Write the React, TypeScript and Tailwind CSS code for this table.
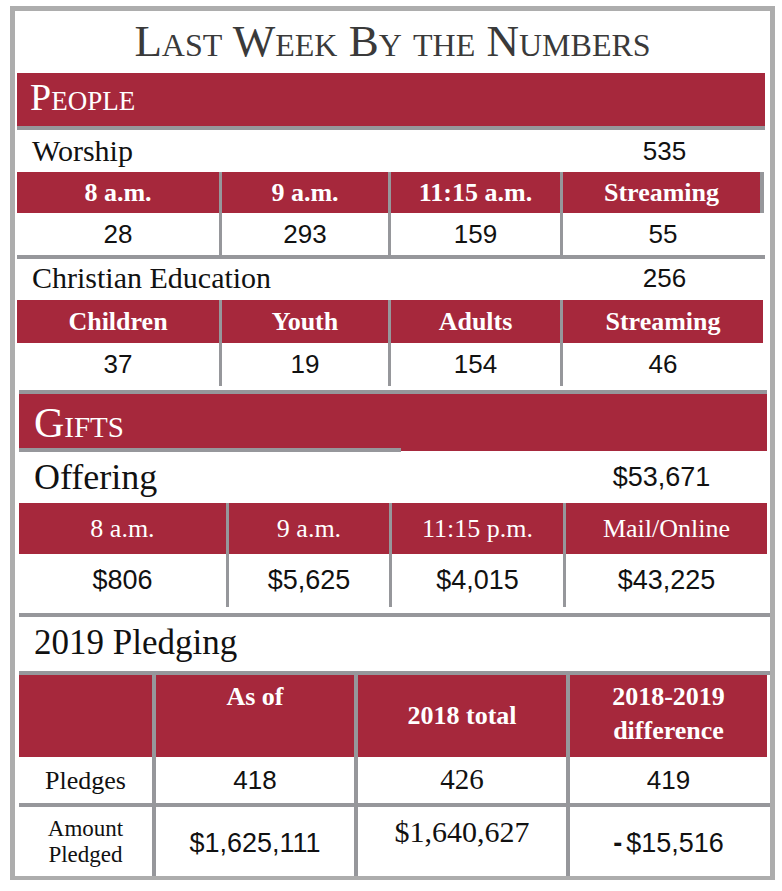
const serif = "font-['Liberation_Serif',serif]";
const sans = "font-['Liberation_Sans',Arial,sans-serif]";

function PeopleHeader({ labels, rightBar }: { labels: string[]; rightBar?: boolean }) {
  return (
    <div
      className={`ml-[2px] grid h-[41px] ${
        rightBar ? "grid-cols-[202px_169px_172px_200px_4px]" : "grid-cols-[202px_169px_172px_203px]"
      } ${serif} text-[26px] font-bold text-white`}
    >
      {labels.map((l, i) => (
        <div
          key={l + i}
          className={`flex items-center justify-center bg-[#a6283c] ${i > 0 ? "border-l-[3px] border-[#96979b]" : ""}`}
        >
          {l}
        </div>
      ))}
      {rightBar && <div className="bg-[#96979b]" />}
    </div>
  );
}

function PeopleData({ values, h }: { values: string[]; h: string }) {
  return (
    <div className={`ml-[2px] grid grid-cols-[202px_169px_172px_203px] ${h} ${sans} text-[26px] text-[#111]`}>
      {values.map((v, i) => (
        <div
          key={v + i}
          className={`flex items-center justify-center ${i > 0 ? "border-l-[3px] border-[#96979b]" : ""}`}
        >
          {v}
        </div>
      ))}
    </div>
  );
}

export default function App() {
  return (
    <div className="h-[891px] w-[782px] bg-white pl-[10px] pt-[6px]">
      <div className="w-[765px] border-x-[5px] border-b-[4px] border-t-[5px] border-[#adadad] bg-white">
        {/* Title */}
        <div
          className={`h-[62px] pt-[8px] text-center text-[45px] leading-[45px] text-[#3a3a3a] ${serif} [font-variant:small-caps]`}
        >
          Last Week By the Numbers
        </div>

        {/* People */}
        <div
          className={`ml-[2px] h-[53px] w-[748px] bg-[#a6283c] pl-[13px] pt-[5px] text-[38px] leading-[38px] text-white ${serif} [font-variant:small-caps]`}
        >
          People
        </div>
        <div className="ml-[2px] h-[4px] w-[748px] bg-[#96979b]" />

        {/* Worship */}
        <div className="flex h-[42px]">
          <div className={`w-[548px] pl-[17px] pt-[6px] text-[30px] leading-[30px] text-[#111] ${serif}`}>Worship</div>
          <div className={`w-[203px] pt-[8px] text-center text-[26px] leading-[26px] text-[#111] ${sans}`}>535</div>
        </div>
        <PeopleHeader labels={["8 a.m.", "9 a.m.", "11:15 a.m.", "Streaming"]} rightBar />
        <PeopleData values={["28", "293", "159", "55"]} h="h-[42px]" />
        <div className="ml-[2px] h-[4px] w-[748px] bg-[#96979b]" />

        {/* Christian Education */}
        <div className="flex h-[41px]">
          <div className={`w-[548px] pl-[17px] pt-[4px] text-[30px] leading-[30px] text-[#111] ${serif}`}>
            Christian Education
          </div>
          <div className={`w-[203px] pt-[6px] text-center text-[26px] leading-[26px] text-[#111] ${sans}`}>256</div>
        </div>
        <div
          className={`ml-[2px] grid h-[43px] grid-cols-[202px_169px_172px_203px] ${serif} text-[26px] font-bold text-white`}
        >
          <div className="flex items-center justify-center bg-[#a6283c]">Children</div>
          <div className="flex items-center justify-center border-l-[3px] border-[#96979b] bg-[#a6283c]">Youth</div>
          <div className="flex items-center justify-center border-l-[3px] border-[#96979b] bg-[#a6283c]">Adults</div>
          <div className="flex items-center justify-center border-l-[3px] border-[#96979b] bg-[#a6283c]">Streaming</div>
        </div>
        <PeopleData values={["37", "19", "154", "46"]} h="h-[43px]" />
        <div className="h-[4px]" />

        {/* Gifts */}
        <div className="ml-[4px] h-[4px] w-[748px] bg-[#96979b]" />
        <div
          className={`ml-[4px] h-[54px] w-[748px] bg-[#a6283c] pl-[15px] pt-[8px] text-[42px] leading-[42px] text-white ${serif} [font-variant:small-caps]`}
        >
          Gifts
        </div>
        <div className="ml-[4px] flex h-[4px] w-[748px] items-start">
          <div className="h-[4px] w-[382px] bg-[#96979b]" />
          <div className="h-[3px] w-[366px] bg-[#a6283c]" />
        </div>

        {/* Offering */}
        <div className="flex h-[51px]">
          <div className={`w-[551px] pl-[19px] pt-[7px] text-[36px] leading-[36px] text-[#111] ${serif}`}>Offering</div>
          <div className={`w-[201px] pr-[10px] pt-[12px] text-center text-[27px] leading-[27px] text-[#111] ${sans}`}>
            $53,671
          </div>
        </div>
        <div className={`ml-[4px] grid h-[51px] grid-cols-[207px_163px_174px_204px] ${serif} text-[26px] text-white`}>
          <div className="flex items-center justify-center bg-[#a6283c]">8 a.m.</div>
          <div className="flex items-center justify-center border-l-[3px] border-[#96979b] bg-[#a6283c]">9 a.m.</div>
          <div className="flex items-center justify-center border-l-[3px] border-[#96979b] bg-[#a6283c]">11:15 p.m.</div>
          <div className="flex items-center justify-center border-l-[3px] border-[#96979b] bg-[#a6283c]">Mail/Online</div>
        </div>
        <div className={`ml-[4px] grid h-[53px] grid-cols-[207px_163px_174px_204px] ${sans} text-[27px] text-[#111]`}>
          <div className="flex items-center justify-center">$806</div>
          <div className="flex items-center justify-center border-l-[3px] border-[#96979b]">$5,625</div>
          <div className="flex items-center justify-center border-l-[3px] border-[#96979b]">$4,015</div>
          <div className="flex items-center justify-center border-l-[3px] border-[#96979b]">$43,225</div>
        </div>
        <div className="h-[6px]" />
        <div className="ml-[4px] h-[4px] w-[751px] bg-[#96979b]" />

        {/* Pledging */}
        <div className={`h-[54px] pl-[19px] pt-[8px] text-[35px] leading-[35px] text-[#111] ${serif}`}>2019 Pledging</div>
        <div className="ml-[4px] h-[4px] w-[751px] bg-[#96979b]" />
        <div
          className={`ml-[4px] grid h-[82px] grid-cols-[133px_202px_212px_201px] ${serif} text-[26px] font-bold leading-[34px] text-white`}
        >
          <div className="bg-[#a6283c]" />
          <div className="border-l-4 border-[#96979b] bg-[#a6283c] pt-[5px] text-center">As of</div>
          <div className="flex items-center justify-center border-l-4 border-[#96979b] bg-[#a6283c]">2018 total</div>
          <div className="border-l-4 border-[#96979b] bg-[#a6283c] pt-[5px] text-center">
            2018-2019
            <br />
            difference
          </div>
        </div>
        <div className={`ml-[4px] grid h-[46px] grid-cols-[133px_202px_212px_201px] text-[#111]`}>
          <div className={`flex items-center justify-center ${serif} text-[26px]`}>Pledges</div>
          <div className={`flex items-center justify-center border-l-4 border-[#96979b] ${sans} text-[26px]`}>418</div>
          <div className={`flex items-center justify-center border-l-4 border-[#96979b] ${serif} text-[29px]`}>426</div>
          <div className={`flex items-center justify-center border-l-4 border-[#96979b] ${sans} text-[26px]`}>419</div>
        </div>
        <div className="ml-[4px] h-[4px] w-[751px] bg-[#96979b]" />
        <div className={`ml-[4px] grid h-[69px] grid-cols-[133px_202px_212px_201px] text-[#111]`}>
          <div className={`flex flex-col items-center justify-center text-center ${serif} text-[23px] leading-[26px]`}>
            <span>Amount</span>
            <span>Pledged</span>
          </div>
          <div className={`flex items-center justify-center border-l-4 border-[#96979b] pt-[3px] ${sans} text-[27px]`}>
            $1,625,111
          </div>
          <div
            className={`border-l-4 border-[#96979b] pt-[10px] text-center ${serif} text-[30px] leading-[30px]`}
          >
            $1,640,627
          </div>
          <div className={`flex items-center justify-center border-l-4 border-[#96979b] pt-[3px] ${sans} text-[27px]`}>
            <span className="mr-[4px] font-bold">-</span>$15,516
          </div>
        </div>
      </div>
    </div>
  );
}
